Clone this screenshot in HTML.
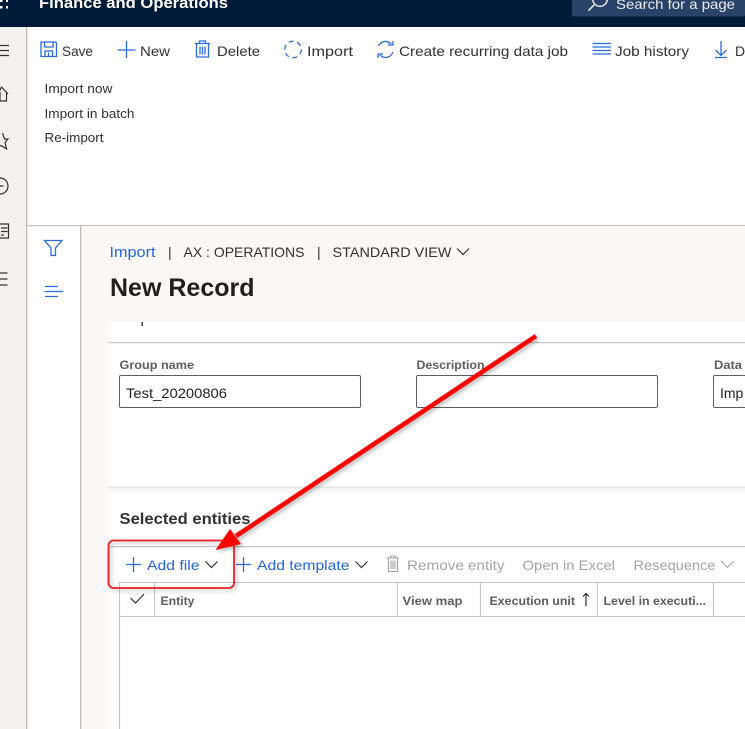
<!DOCTYPE html>
<html><head><meta charset="utf-8"><style>
html,body{margin:0;padding:0;width:745px;height:729px;overflow:hidden;background:#fff}
svg{display:block}
text{font-family:"Liberation Sans",Arial,sans-serif;font-size:14px;fill:#323130}
.b{fill:none;stroke:#2b6be0;stroke-width:1.3}
.d{fill:none;stroke:#323130;stroke-width:1.2}
.h{font-weight:bold;font-size:12px;fill:#605e5c}
.g{fill:#a6a4a2}
.l{fill:#2266e3}
</style></head><body>
<svg width="745" height="729" viewBox="0 0 745 729" xmlns="http://www.w3.org/2000/svg">
<defs><filter id="s" x="-10%" y="-10%" width="125%" height="125%"><feDropShadow dx="2" dy="2" stdDeviation="2" flood-color="#000" flood-opacity=".28"/></filter></defs>
<rect width="745" height="729" fill="#fff"/>
<!-- header -->
<rect width="745" height="27" fill="#001a38"/>
<rect x="0" y="0" width="2.500" height="2" fill="#fff"/><rect x="6" y="0" width="2" height="2" fill="#fff"/><rect x="0" y="6" width="2.500" height="2.500" fill="#fff"/><rect x="6" y="6" width="2" height="2.500" fill="#fff"/>
<text x="39" y="8" textLength="189" lengthAdjust="spacingAndGlyphs" style="font-size:16px;font-weight:bold;fill:#fff">Finance and Operations</text>
<rect x="572" y="-3" width="173" height="19.500" rx="2" fill="#2a4268"/>
<path d="M588.500 10.500L595 4" fill="none" stroke="#fff" stroke-width="1.400"/>
<circle cx="600" cy="-1" r="7.300" fill="none" stroke="#fff" stroke-width="1.300"/>
<text x="616" y="9" textLength="119" lengthAdjust="spacingAndGlyphs" style="fill:#e8ecf2">Search for a page</text>
<!-- rail -->
<rect x="0" y="27" width="26" height="702" fill="#f3f2f1"/>
<rect x="26" y="27" width="1.300" height="702" fill="#bdbbb9"/>
<path d="M0 45.500H9M0 50.500H9M0 55.500H9" class="d"/>
<path d="M-2 94 L1.500 87 L8 94 M0 92 V101 H6.500 V92" class="d" stroke-linejoin="round"/>
<path d="M2.500 133 L4.500 139 H8 L5 142.500 L6.500 149 L1 145.500 L-2 147" class="d"/>
<path d="M0 178 A8 8 0 1 1 0 194 M0 186H3.500" class="d"/>
<path d="M-1 224H8.500V238H-1M1 228H7.500M1 231.500H7.500M1 235H4" class="d"/>
<path d="M0 273H7.500M0 279H7.500M0 285H7.500" stroke="#555" stroke-width="1.400" fill="none"/>
<!-- command bar -->
<path class="b" d="M41 42H55.500L56.500 43V56.500H41ZM44.500 42V47H53V42M45 56.500V51H52.500V56.500M48.500 52.500V56" stroke-width="1.500"/>
<text x="62" y="56" textLength="31" lengthAdjust="spacingAndGlyphs">Save</text>
<path class="b" d="M117.500 50H135.500M126.500 41V58"/>
<text x="140" y="56" textLength="30" lengthAdjust="spacingAndGlyphs">New</text>
<path class="b" d="M195 43.500H210M199.500 43.500V41H205.500V43.500M196.500 43.500V57H208.500V43.500M200 46.500V54.500M202.500 46.500V54.500M205 46.500V54.500" stroke-width="1.500"/>
<text x="217" y="56" textLength="43" lengthAdjust="spacingAndGlyphs">Delete</text>
<circle cx="293" cy="49.500" r="8.300" class="b" stroke-dasharray="5 3.600" stroke-width="1.500"/>
<text x="307" y="56" textLength="46" lengthAdjust="spacingAndGlyphs">Import</text>
<path class="b" d="M378.500 46A7.500 7.500 0 0 1 391 44M392.800 52A7.500 7.500 0 0 1 380 55" stroke-width="1.800"/>
<path d="M388 45H393V41M383 54H378V58" class="b" stroke-width="1.500"/>
<text x="399" y="56" textLength="169" lengthAdjust="spacingAndGlyphs">Create recurring data job</text>
<path class="b" d="M592.500 43.500H611M592.500 47H611M592.500 50.500H611M592.500 54H611" stroke-width="1.500"/>
<text x="615" y="56" textLength="74" lengthAdjust="spacingAndGlyphs">Job history</text>
<path class="b" d="M721 41V55M715.500 50L721 55.500L726.500 50M715 57.500H727"/>
<text x="735" y="56">D</text>
<text x="44.500" y="93" textLength="68" lengthAdjust="spacingAndGlyphs" style="font-size:13px">Import now</text>
<text x="44.500" y="118" textLength="90" lengthAdjust="spacingAndGlyphs" style="font-size:13px">Import in batch</text>
<text x="44.500" y="142" textLength="59" lengthAdjust="spacingAndGlyphs" style="font-size:13px">Re-import</text>
<!-- frame -->
<rect x="27" y="225" width="718" height="1.200" fill="#c4c2c0"/>
<rect x="81" y="226" width="664" height="503" fill="#faf9f8"/>
<rect x="80" y="226" width="1.200" height="503" fill="#bdbbb9"/>
<path class="b" d="M44.500 240.500H62L55.500 248V255.500H51V248Z" stroke-width="1.400"/>
<path class="b" d="M45 286.500H58M44.500 291.500H63M45 296.500H58" stroke-width="1.400"/>
<text x="109.500" y="257" textLength="46" lengthAdjust="spacingAndGlyphs" class="l" style="font-size:15px">Import</text>
<text x="168" y="257" style="font-size:14px">|</text>
<text x="183.500" y="257" textLength="121" lengthAdjust="spacingAndGlyphs" style="font-size:14px">AX : OPERATIONS</text>
<text x="317" y="257" style="font-size:14px">|</text>
<text x="332.500" y="257" textLength="119" lengthAdjust="spacingAndGlyphs" style="font-size:14px">STANDARD VIEW</text>
<path d="M457 248.500L463 254.500L469 248.500" class="d"/>
<text x="110" y="296" textLength="144.500" lengthAdjust="spacingAndGlyphs" style="font-size:25px;font-weight:bold;fill:#201f1e">New Record</text>
<!-- form card -->
<rect x="108" y="322" width="637" height="164.500" fill="#fff"/>
<rect x="108" y="486.500" width="637" height="1" fill="#e3e1df"/>
<rect x="108" y="487.500" width="637" height="1" fill="#f1f0ee"/>
<rect x="141.500" y="322" width="1.400" height="4" fill="#323130"/>
<rect x="108" y="342" width="637" height="1.200" fill="#c8c6c4"/>
<text x="119.500" y="369" textLength="74.500" lengthAdjust="spacingAndGlyphs" class="h">Group name</text>
<rect x="119.500" y="375.500" width="241" height="32" rx="1.500" fill="#fff" stroke="#605e5c" stroke-width="1"/>
<text x="126" y="398" textLength="101" lengthAdjust="spacingAndGlyphs" style="fill:#201f1e">Test_20200806</text>
<text x="416.500" y="369" textLength="68" lengthAdjust="spacingAndGlyphs" class="h">Description</text>
<rect x="416.500" y="375.500" width="241" height="32" rx="1.500" fill="#fff" stroke="#605e5c" stroke-width="1"/>
<text x="714" y="369" textLength="28" lengthAdjust="spacingAndGlyphs" class="h">Data</text>
<rect x="713.500" y="375.500" width="60" height="32" rx="1.500" fill="#fff" stroke="#605e5c" stroke-width="1"/>
<text x="720" y="398" style="fill:#201f1e">Imp</text>
<!-- entities card -->
<rect x="108" y="493" width="637" height="236" fill="#fff"/>
<text x="119.500" y="524" textLength="131" lengthAdjust="spacingAndGlyphs" style="font-size:16px;font-weight:bold;fill:#323130">Selected entities</text>
<rect x="110" y="546" width="635" height="1.200" fill="#c8c6c4"/>
<path class="b" d="M126 564.500H141M133.500 557V572" stroke="#2b6be0"/>
<text x="147" y="570" textLength="52.500" lengthAdjust="spacingAndGlyphs" class="l">Add file</text>
<path d="M205.500 561.500L211.500 567.500L217.500 561.500" class="d"/>
<path class="b" d="M236 564.500H251M243.500 557V572"/>
<text x="257" y="570" textLength="92.500" lengthAdjust="spacingAndGlyphs" class="l">Add template</text>
<path d="M355.500 561.500L361.500 567.500L367.500 561.500" class="d"/>
<path d="M387 558H399M390.500 558V556H395.500V558M388.500 558V571.500H397.500V558M391 560.500V569M393 560.500V569M395 560.500V569" fill="none" stroke="#a6a4a2" stroke-width="1.100"/>
<text x="407" y="570" textLength="97.500" lengthAdjust="spacingAndGlyphs" class="g">Remove entity</text>
<text x="522.500" y="570" textLength="92.500" lengthAdjust="spacingAndGlyphs" class="g">Open in Excel</text>
<text x="633.500" y="570" textLength="82" lengthAdjust="spacingAndGlyphs" class="g">Resequence</text>
<path d="M721 561L727.500 567.500L734 561" fill="none" stroke="#a6a4a2" stroke-width="1.100"/>
<!-- grid -->
<path d="M119.500 729V582.500H745M119.500 616.500H745M154.500 583V616M397.500 583V616M480.500 583V616M597.500 583V616M713.500 583V616" fill="none" stroke="#c8c6c4" stroke-width="1.100"/>
<path d="M130.500 598L135.500 603L144 594" class="d"/>
<text x="160.500" y="605" textLength="34" lengthAdjust="spacingAndGlyphs" class="h">Entity</text>
<text x="402.500" y="605" textLength="60" lengthAdjust="spacingAndGlyphs" class="h">View map</text>
<text x="489.500" y="605" textLength="85.500" lengthAdjust="spacingAndGlyphs" class="h">Execution unit</text>
<path d="M586 606V593.500M583 596.500L586 593.500L589 596.500" class="d" stroke-width="1"/>
<text x="603.500" y="605" textLength="102.500" lengthAdjust="spacingAndGlyphs" class="h">Level in executi...</text>
<!-- annotations -->
<g filter="url(#s)">
<rect x="108.500" y="540.500" width="125.500" height="47.500" rx="5" fill="none" stroke="#ee1c25" stroke-width="1.800"/>
<path d="M536 336L236 536" stroke="#f00" stroke-width="4.600" fill="none"/>
<path d="M215.500 550L230 529L241 544Z" fill="#f00"/>
</g>
</svg>
</body></html>
